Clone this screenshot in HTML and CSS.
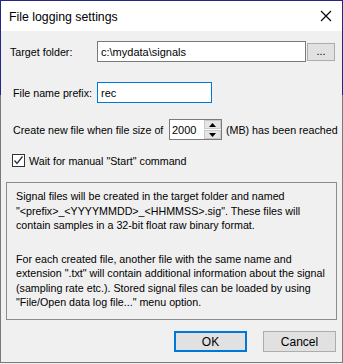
FILE: index.html
```html
<!DOCTYPE html>
<html>
<head>
<meta charset="utf-8">
<link rel="stylesheet" href="styles.css">
</head>
<body>
<div class="window">
  <div class="titlebar">
    <span class="title">File logging settings</span>
    <svg class="close" width="12" height="12" viewBox="0 0 12 12"><path d="M1 1L11 11M11 1L1 11" stroke="#000" stroke-width="1.1" fill="none"/></svg>
  </div>
  <div class="client">
    <div class="row row-folder">
      <span class="label label-folder">Target folder:</span>
      <div class="input input-folder">c:\mydata\signals</div>
      <div class="btn btn-browse">...</div>
    </div>
    <div class="row row-prefix">
      <span class="label label-prefix">File name prefix:</span>
      <div class="input input-prefix focused">rec</div>
    </div>
    <div class="row row-size">
      <span class="label label-size">Create new file when file size of</span>
      <div class="spin">
        <span class="spin-val">2000</span>
        <div class="spin-btns">
          <div class="spin-up"><svg width="7" height="4" viewBox="0 0 7 4"><path d="M0 4L3.5 0L7 4Z" fill="#000"/></svg></div>
          <div class="spin-down"><svg width="7" height="4" viewBox="0 0 7 4"><path d="M0 0L3.5 4L7 0Z" fill="#000"/></svg></div>
        </div>
      </div>
      <span class="label label-mb">(MB) has been reached</span>
    </div>
    <div class="row row-check">
      <div class="checkbox"><svg width="11" height="11" viewBox="0 0 11 11"><path d="M1.5 5.5L4 8.5L9.5 1.5" stroke="#333" stroke-width="1.3" fill="none"/></svg></div>
      <span class="label">Wait for manual "Start" command</span>
    </div>
    <div class="group">
      <p class="para">Signal files will be created in the target folder and named<br>"&lt;prefix&gt;_&lt;YYYYMMDD&gt;_&lt;HHMMSS&gt;.sig". These files will<br>contain samples in a 32-bit float raw binary format.</p>
      <p class="para para2">For each created file, another file with the same name and<br>extension ".txt" will contain additional information about the signal<br>(sampling rate etc.). Stored signal files can be loaded by using<br>"File/Open data log file..." menu option.</p>
    </div>
    <div class="row row-buttons">
      <div class="btn btn-ok">OK</div>
      <div class="btn btn-cancel">Cancel</div>
    </div>
  </div>
</div>
</body>
</html>
```
FILE: styles.css
```css
html, body {
  margin: 0;
  padding: 0;
  background: #f0f0f0;
}
.window {
  box-sizing: border-box;
  width: 343px;
  height: 363px;
  border: 1px solid;
  border-image: linear-gradient(to bottom, #26268a 0, #26268a 95px, #7a7a7a 95px, #7a7a7a 100%) 1;
  background: #f0f0f0;
  font-family: "Liberation Sans", Arial, sans-serif;
  font-size: 10.7px;
  color: #000;
  display: flex;
  flex-direction: column;
}
.titlebar {
  height: 30px;
  background: #fff;
  display: flex;
  align-items: center;
  padding-left: 8px;
  padding-right: 10px;
}
.title {
  font-size: 12.3px;
  flex: 1;
  padding-top: 1px;
}
.close {
  display: block;
}
.client {
  flex: 1;
  display: flex;
  flex-direction: column;
}
.row {
  display: flex;
  align-items: center;
}
.row-folder {
  margin-top: 10px;
  height: 21px;
  padding-left: 9px;
}
.label-folder {
  width: 87px;
}
.input {
  box-sizing: border-box;
  height: 21px;
  background: #fff;
  border: 1px solid #7a7a7a;
  display: flex;
  align-items: center;
  padding-left: 3px;
  font-size: 11px;
}
.input-folder {
  width: 209px;
}
.btn {
  box-sizing: border-box;
  background: #e1e1e1;
  border: 1px solid #adadad;
  display: flex;
  align-items: center;
  justify-content: center;
}
.btn-browse {
  width: 28px;
  height: 18px;
  margin-left: 1px;
  font-size: 11px;
  padding-bottom: 2px;
}
.row-prefix {
  margin-top: 20px;
  height: 21px;
  padding-left: 12px;
}
.label-prefix {
  width: 84px;
}
.input-prefix {
  width: 115px;
}
.focused {
  border-color: #0078d7;
}
.row-size {
  margin-top: 16px;
  height: 21px;
  padding-left: 12px;
}
.label-size {
  width: 156px;
}
.spin {
  box-sizing: border-box;
  width: 53px;
  height: 21px;
  background: #fff;
  border: 1px solid #7a7a7a;
  display: flex;
  align-items: center;
}
.spin-val {
  flex: 1;
  padding-left: 2px;
  font-size: 11px;
}
.spin-btns {
  width: 17px;
  height: 19px;
  display: flex;
  flex-direction: column;
  gap: 1px;
}
.spin-up, .spin-down {
  flex: 1;
  background: #e5e5e5;
  border: 1px solid #c8c8c8;
  box-sizing: border-box;
  display: flex;
  align-items: center;
  justify-content: center;
}
.label-mb {
  margin-left: 4px;
}
.row-check {
  margin-top: 14px;
  height: 13px;
  padding-left: 11px;
}
.checkbox {
  box-sizing: border-box;
  width: 13px;
  height: 13px;
  border: 1px solid #333;
  background: #fff;
  margin-right: 4px;
  display: flex;
  align-items: center;
  justify-content: center;
}
.checkbox svg {
  display: block;
}
.group {
  box-sizing: border-box;
  margin-top: 15px;
  margin-left: 5px;
  width: 331px;
  height: 138px;
  border: 1px solid #8c8c8c;
  padding: 6px 0 0 9px;
}
.para {
  margin: 0;
  line-height: 14.5px;
  font-size: 10.7px;
  white-space: nowrap;
}
.para2 {
  margin-top: 19px;
}
.row-buttons {
  margin-top: 11px;
  height: 21px;
  justify-content: flex-end;
  padding-right: 6px;
  gap: 16px;
}
.btn-ok {
  width: 73px;
  height: 21px;
  border: 2px solid #0078d7;
  font-size: 12px;
}
.btn-cancel {
  width: 73px;
  height: 21px;
  font-size: 12px;
}
```
